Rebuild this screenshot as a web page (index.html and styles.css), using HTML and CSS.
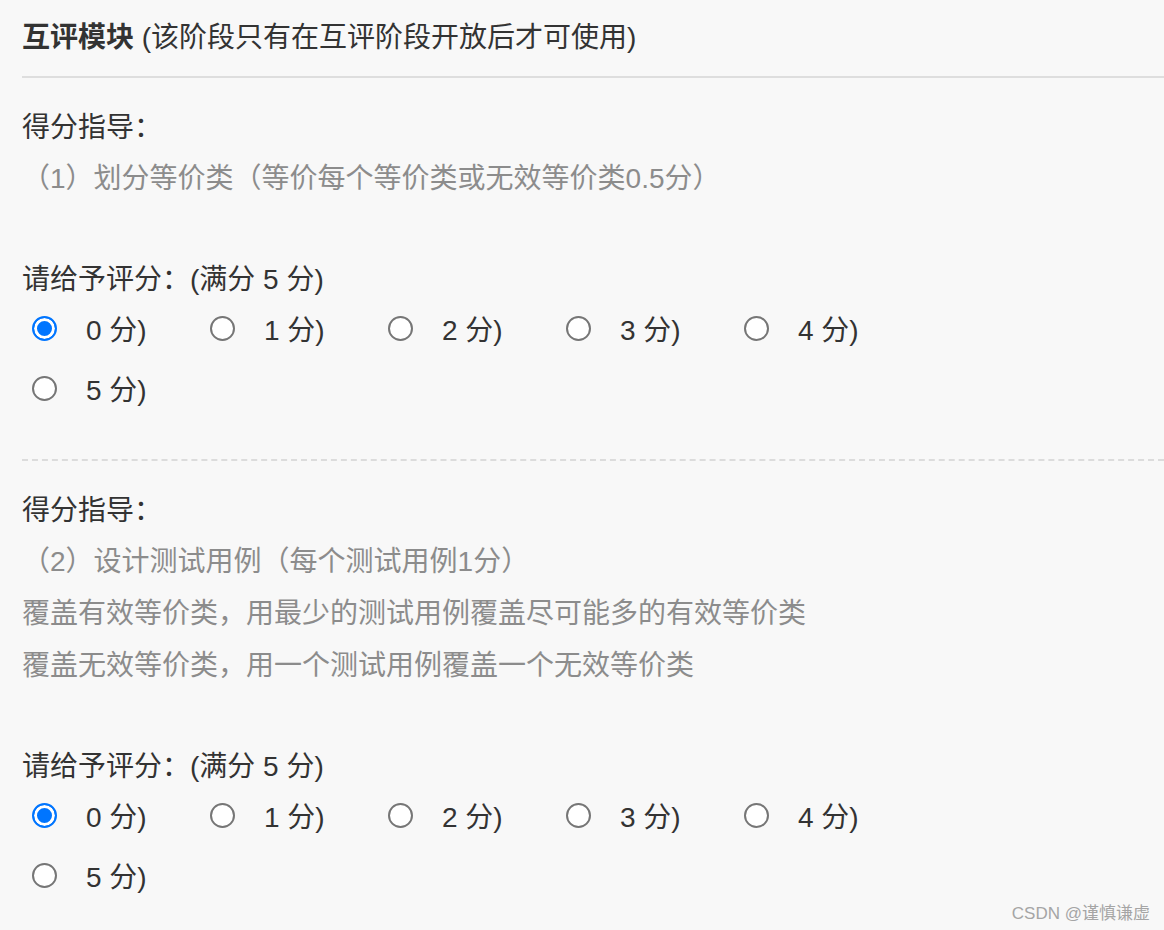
FILE: index.html
```html
<!DOCTYPE html>
<html lang="zh-CN">
<head>
  <meta charset="UTF-8">
  <meta name="viewport" content="width=device-width, initial-scale=1.0">
  <title>互评模块</title>
  <link rel="stylesheet" href="styles.css">
</head>
<body>
  <div class="module">
    <div class="module-title"><b>互评模块</b> (该阶段只有在互评阶段开放后才可使用)</div>

    <div class="item first">
      <div class="guide-title">得分指导：</div>
      <div class="guide-text">（1）划分等价类（等价每个等价类或无效等价类0.5分）</div>
      <div class="score-label">请给予评分：(满分 5 分)</div>
      <div class="options">
        <label class="option"><input type="radio" name="s1" checked><span>0 分)</span></label>
        <label class="option"><input type="radio" name="s1"><span>1 分)</span></label>
        <label class="option"><input type="radio" name="s1"><span>2 分)</span></label>
        <label class="option"><input type="radio" name="s1"><span>3 分)</span></label>
        <label class="option"><input type="radio" name="s1"><span>4 分)</span></label>
        <label class="option"><input type="radio" name="s1"><span>5 分)</span></label>
      </div>
    </div>

    <div class="item">
      <div class="guide-title">得分指导：</div>
      <div class="guide-text">（2）设计测试用例（每个测试用例1分）</div>
      <div class="guide-text">覆盖有效等价类，用最少的测试用例覆盖尽可能多的有效等价类</div>
      <div class="guide-text">覆盖无效等价类，用一个测试用例覆盖一个无效等价类</div>
      <div class="score-label">请给予评分：(满分 5 分)</div>
      <div class="options">
        <label class="option"><input type="radio" name="s2" checked><span>0 分)</span></label>
        <label class="option"><input type="radio" name="s2"><span>1 分)</span></label>
        <label class="option"><input type="radio" name="s2"><span>2 分)</span></label>
        <label class="option"><input type="radio" name="s2"><span>3 分)</span></label>
        <label class="option"><input type="radio" name="s2"><span>4 分)</span></label>
        <label class="option"><input type="radio" name="s2"><span>5 分)</span></label>
      </div>
    </div>
  </div>

  <div class="watermark">CSDN @谨慎谦虚</div>
</body>
</html>
```

FILE: styles.css
```css
body {
  margin: 0;
  padding: 0 0 0 22px;
  background-color: #f8f8f8;
  color: #333;
  font-family: "Liberation Sans", Arial, "Noto Sans CJK SC", sans-serif;
  font-size: 28px;
  height: 930px;
  overflow: hidden;
}
.module-title {
  line-height: 48px;
  padding: 14px 0;
  border-bottom: 2px solid #dedede;
}
.module-title b {
  font-weight: bold;
}
.item {
  padding-top: 24px;
}
.item.first {
  padding-bottom: 41px;
  border-bottom: 2px dashed #dcdcdc;
}
.guide-title {
  line-height: 51px;
}
.guide-text {
  line-height: 52px;
  color: #8c8c8c;
}
.score-label {
  margin-top: 57px;
  line-height: 36px;
}
.options {
  display: grid;
  grid-template-columns: repeat(5, 178px);
  grid-auto-rows: 60px;
}
.option {
  display: flex;
  align-items: center;
  padding-left: 10px;
}
/* radio drawn by hand, the native one is too thin at this size */
.option input {
  appearance: none;
  box-sizing: border-box;
  width: 25px;
  height: 25px;
  margin: 0 29px 0 0;
  border: 2px solid #767676;
  border-radius: 50%;
  background-color: white;
}
.option input:checked {
  border-color: #0075ff;
  background-color: #0075ff;
  box-shadow: inset 0 0 0 3px white;
}
.watermark {
  position: absolute;
  right: 14px;
  bottom: 6px;
  font-size: 17px;
  color: #a5a5a5;
}
```
